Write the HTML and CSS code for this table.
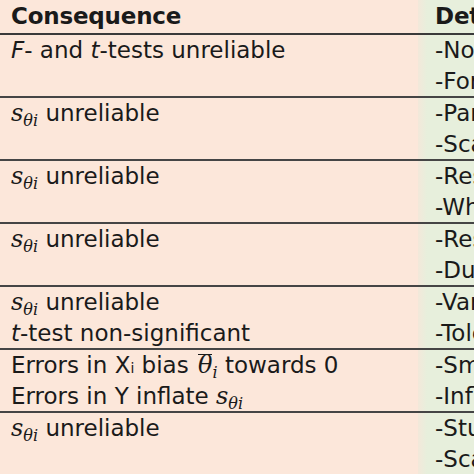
FILE: index.html
```html
<!DOCTYPE html>
<html>
<head>
<meta charset="utf-8">
<link rel="stylesheet" href="styles.css">
</head>
<body>
<table class="tbl">
  <thead>
    <tr><th class="c1">Consequence</th><th class="c2">Detection</th></tr>
  </thead>
  <tbody>
    <tr>
      <td class="c1"><div><i>F</i>- and <i>t</i>-tests unreliable</div><div>&nbsp;</div></td>
      <td class="c2"><div>-Normal probability plot</div><div>-Formal normality tests</div></td>
    </tr>
    <tr>
      <td class="c1"><div><span class="m">s<sub>θi</sub></span> unreliable</div><div>&nbsp;</div></td>
      <td class="c2"><div>-Partial residual plots</div><div>-Scatterplots</div></td>
    </tr>
    <tr>
      <td class="c1"><div><span class="m">s<sub>θi</sub></span> unreliable</div><div>&nbsp;</div></td>
      <td class="c2"><div>-Residual plots</div><div>-White's test</div></td>
    </tr>
    <tr>
      <td class="c1"><div><span class="m">s<sub>θi</sub></span> unreliable</div><div>&nbsp;</div></td>
      <td class="c2"><div>-Residual plots</div><div>-Durbin-Watson test</div></td>
    </tr>
    <tr>
      <td class="c1"><div><span class="m">s<sub>θi</sub></span> unreliable</div><div><i>t</i>-test non-significant</div></td>
      <td class="c2"><div>-Variance inflation factor</div><div>-Tolerance</div></td>
    </tr>
    <tr>
      <td class="c1"><div>Errors in X<span class="sm">i</span> bias <span class="m"><span class="bar">θ</span><sub>i</sub></span> towards 0</div><div>Errors in Y inflate <span class="m">s<sub>θi</sub></span></div></td>
      <td class="c2"><div>-Small reliability</div><div>-Inflated variance</div></td>
    </tr>
    <tr class="last">
      <td class="c1"><div><span class="m">s<sub>θi</sub></span> unreliable</div><div>&nbsp;</div></td>
      <td class="c2"><div>-Studentized residuals</div><div>-Scatterplots</div></td>
    </tr>
  </tbody>
</table>
</body>
</html>
```
FILE: styles.css
```css
html, body {
  margin: 0;
  padding: 0;
  width: 474px;
  height: 474px;
  overflow: hidden;
  background: #fce7da;
}
.tbl {
  border-collapse: collapse;
  font-family: "DejaVu Sans", sans-serif;
  font-size: 23px;
  color: #1a1a1a;
  table-layout: fixed;
  width: 780px;
}
.tbl th, .tbl td {
  text-align: left;
  vertical-align: top;
  padding: 0;
  white-space: nowrap;
  overflow: hidden;
}
.c1 {
  width: 418px;
  background: #fce7da;
  padding-left: 11px !important;
  box-sizing: border-box;
}
.c2 {
  width: 362px;
  background: linear-gradient(to right, #f3e8da 0, #e7efdc 9px);
  padding-left: 17px !important;
}
.tbl th {
  height: 34px;
  font-weight: bold;
  line-height: 32px;
  border-bottom: 2px solid #3a3a3a;
  box-sizing: border-box;
  letter-spacing: -0.2px;
}
.tbl td {
  line-height: 31px;
  border-bottom: 2px solid #454545;
}
.tbl td div {
  height: 31px;
}
.tbl td div + div {
  height: 30px;
}
.m {
  font-family: "DejaVu Serif", serif;
  font-style: italic;
  font-size: 24px;
}
.m sub {
  font-size: 16px;
  vertical-align: -5px;
  line-height: 0;
}
.sm {
  font-size: 14px;
}
.bar {
  display: inline-block;
  line-height: 20px;
  border-top: 1.5px solid #1a1a1a;
  padding-top: 0;
  margin-left: 2px;
}
```
